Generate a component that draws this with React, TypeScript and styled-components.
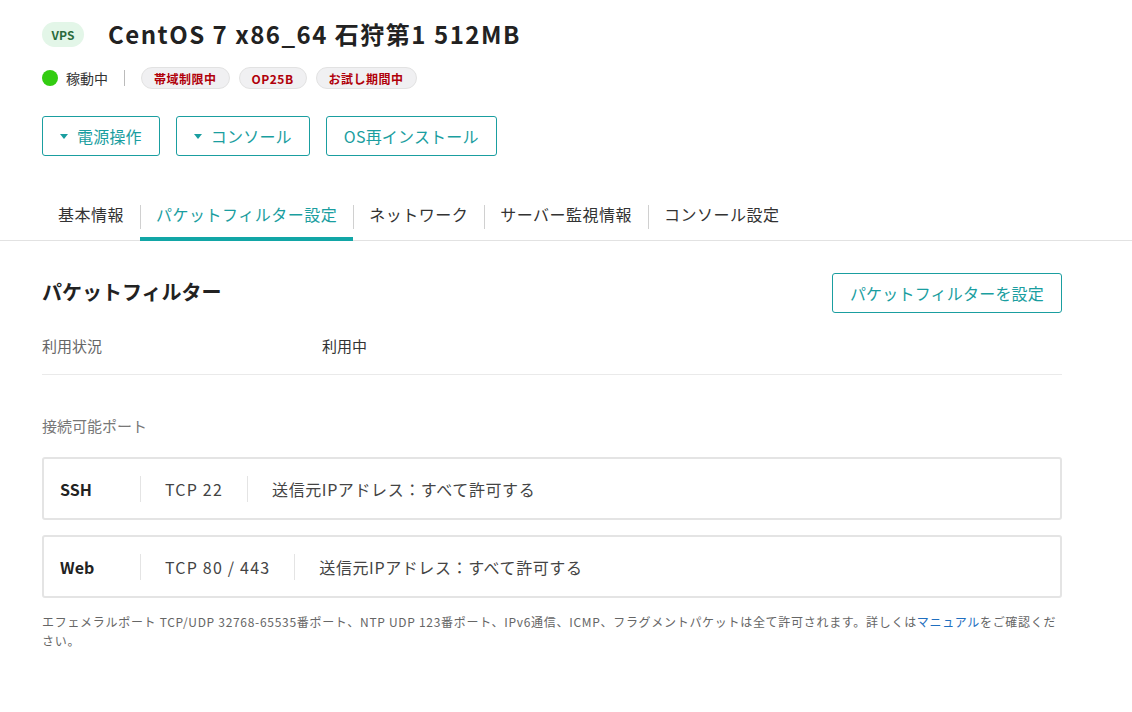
import React from 'react';
import styled, {createGlobalStyle} from "styled-components";

const teal = '#1a9ea0';

const GlobalStyle = createGlobalStyle`
  body {
    margin: 0;
    background: #fff;
    font-family: "Noto Sans CJK JP", "Noto Sans", sans-serif;
    color: #333;
  }
`

type Port = { name: string, proto: string, source: string }

const ports: Port[] = [
    {name: 'SSH', proto: 'TCP 22', source: '送信元IPアドレス：すべて許可する'},
    {name: 'Web', proto: 'TCP 80 / 443', source: '送信元IPアドレス：すべて許可する'},
]

const tabs = ['基本情報', 'パケットフィルター設定', 'ネットワーク', 'サーバー監視情報', 'コンソール設定']

export default function App() {
    return (
        <Page>
            <GlobalStyle/>
            <Header>
                <TitleRow>
                    <PlanBadge>VPS</PlanBadge>
                    <Title>CentOS 7 x86_64 石狩第1 512MB</Title>
                </TitleRow>
                <StatusRow>
                    <Status><Dot/>稼動中</Status>
                    <Divider/>
                    <Tag>帯域制限中</Tag>
                    <Tag>OP25B</Tag>
                    <Tag>お試し期間中</Tag>
                </StatusRow>
                <Actions>
                    <OutlineButton><Caret/>電源操作</OutlineButton>
                    <OutlineButton><Caret/>コンソール</OutlineButton>
                    <OutlineButton>OS再インストール</OutlineButton>
                </Actions>
            </Header>

            <TabBar>
                {tabs.map((t, i) => (
                    <Tab key={t} $active={i === 1} $first={i === 0}>{t}</Tab>
                ))}
            </TabBar>

            <Content>
                <SectionHead>
                    <SectionTitle>パケットフィルター</SectionTitle>
                    <OutlineButton>パケットフィルターを設定</OutlineButton>
                </SectionHead>
                <InfoRow>
                    <InfoLabel>利用状況</InfoLabel>
                    <InfoValue>利用中</InfoValue>
                </InfoRow>

                <SubLabel>接続可能ポート</SubLabel>
                <PortList>
                    {ports.map(p => (
                        <PortCard key={p.name}>
                            <PortName>{p.name}</PortName>
                            <PortCell $latin>{p.proto}</PortCell>
                            <PortCell>{p.source}</PortCell>
                        </PortCard>
                    ))}
                </PortList>
                <Note>
                    エフェメラルポート TCP/UDP 32768-65535番ポート、NTP UDP 123番ポート、IPv6通信、ICMP、フラグメントパケットは全て許可されます。詳しくは<a href="#">マニュアル</a>をご確認ください。
                </Note>
            </Content>
        </Page>
    );
}

const Page = styled.div`
  width: 1132px;
  min-height: 712px;
`

const Header = styled.div`
  padding: 18px 42px 0;
`

const TitleRow = styled.div`
  display: flex;
  align-items: center;
  gap: 24px;
  height: 32px;
`

const PlanBadge = styled.span`
  display: inline-flex;
  align-items: center;
  justify-content: center;
  width: 42px;
  height: 25px;
  border-radius: 13px;
  background: #e3f6e8;
  color: #2a6b3c;
  font-size: 12px;
  font-weight: 700;
`

const Title = styled.h1`
  margin: 0;
  font-size: 24px;
  line-height: 32px;
  font-weight: 700;
  color: #222;
  letter-spacing: 1.5px;
`

const StatusRow = styled.div`
  display: flex;
  align-items: center;
  margin-top: 16px;
  height: 24px;
  gap: 9px;
`

const Status = styled.span`
  display: inline-flex;
  align-items: center;
  gap: 8px;
  font-size: 14px;
  color: #333;
`

const Dot = styled.span`
  width: 16px;
  height: 16px;
  border-radius: 50%;
  background: #33cc11;
`

const Divider = styled.span`
  width: 1px;
  height: 16px;
  background: #bbb;
  margin: 0 7px;
`

const Tag = styled.span`
  display: inline-flex;
  align-items: center;
  height: 22px;
  padding: 0 12px;
  border-radius: 11px;
  border: 1px solid #e2e2e2;
  background: #f0f0f2;
  color: #b0000a;
  font-size: 12px;
  font-weight: 700;
  letter-spacing: 0.5px;
  box-sizing: border-box;
`

const Actions = styled.div`
  display: flex;
  gap: 16px;
  margin-top: 26px;
`

const OutlineButton = styled.button`
  display: inline-flex;
  align-items: center;
  gap: 9px;
  height: 40px;
  padding: 0 17px;
  border: 1px solid ${teal};
  border-radius: 3px;
  background: #fff;
  color: ${teal};
  font-family: inherit;
  font-size: 16px;
  letter-spacing: 0.2px;
  cursor: pointer;
`

const Caret = styled.span`
  width: 0;
  height: 0;
  border-left: 4px solid transparent;
  border-right: 4px solid transparent;
  border-top: 5px solid ${teal};
`

const TabBar = styled.nav`
  display: flex;
  margin-top: 35px;
  padding-left: 42px;
  border-bottom: 1px solid #e2e2e2;
`

const Tab = styled.div<{ $active?: boolean, $first?: boolean }>`
  position: relative;
  height: 50px;
  display: flex;
  align-items: center;
  padding: 0 16px;
  font-size: 16px;
  letter-spacing: 0.5px;
  color: ${p => p.$active ? teal : '#333'};
  border-bottom: 4px solid ${p => p.$active ? '#12a6a6' : 'transparent'};
  box-sizing: border-box;
  margin-bottom: -1px;

  &::before {
    content: "";
    display: ${p => p.$first ? 'none' : 'block'};
    position: absolute;
    left: 0;
    top: 14px;
    height: 24px;
    width: 1px;
    background: #d0d0d0;
  }
`

const Content = styled.div`
  padding: 32px 70px 0 42px;
`

const SectionHead = styled.div`
  display: flex;
  align-items: center;
  justify-content: space-between;
`

const SectionTitle = styled.h2`
  margin: 0 0 3px;
  font-size: 20px;
  font-weight: 700;
  color: #222;
`

const InfoRow = styled.div`
  display: flex;
  align-items: center;
  height: 62px;
  padding-top: 4px;
  box-sizing: border-box;
  border-bottom: 1px solid #eaeaea;
  font-size: 15px;
`

const InfoLabel = styled.span`
  width: 280px;
  color: #666;
`

const InfoValue = styled.span`
  color: #333;
`

const SubLabel = styled.div`
  margin-top: 40px;
  font-size: 15px;
  color: #777;
`

const PortList = styled.div`
  display: flex;
  flex-direction: column;
  gap: 15px;
  margin-top: 21px;
`

const PortCard = styled.div`
  display: flex;
  align-items: center;
  height: 63px;
  border: 2px solid #e4e4e4;
  border-radius: 3px;
  box-sizing: border-box;
  padding: 0 16px;
  font-size: 16px;
`

const PortName = styled.span`
  width: 80px;
  font-weight: 700;
  color: #222;
`

const PortCell = styled.span<{ $latin?: boolean }>`
  display: flex;
  align-items: center;
  height: 26px;
  padding: 0 24px;
  border-left: 1px solid #e4e4e4;
  color: #444;
  letter-spacing: ${p => p.$latin ? 1.2 : 0.6}px;
`

const Note = styled.p`
  margin: 14px 0 0;
  font-size: 12px;
  line-height: 19px;
  letter-spacing: 0.7px;
  color: #666;

  a {
    color: #1f6fc0;
    text-decoration: none;
  }
`
